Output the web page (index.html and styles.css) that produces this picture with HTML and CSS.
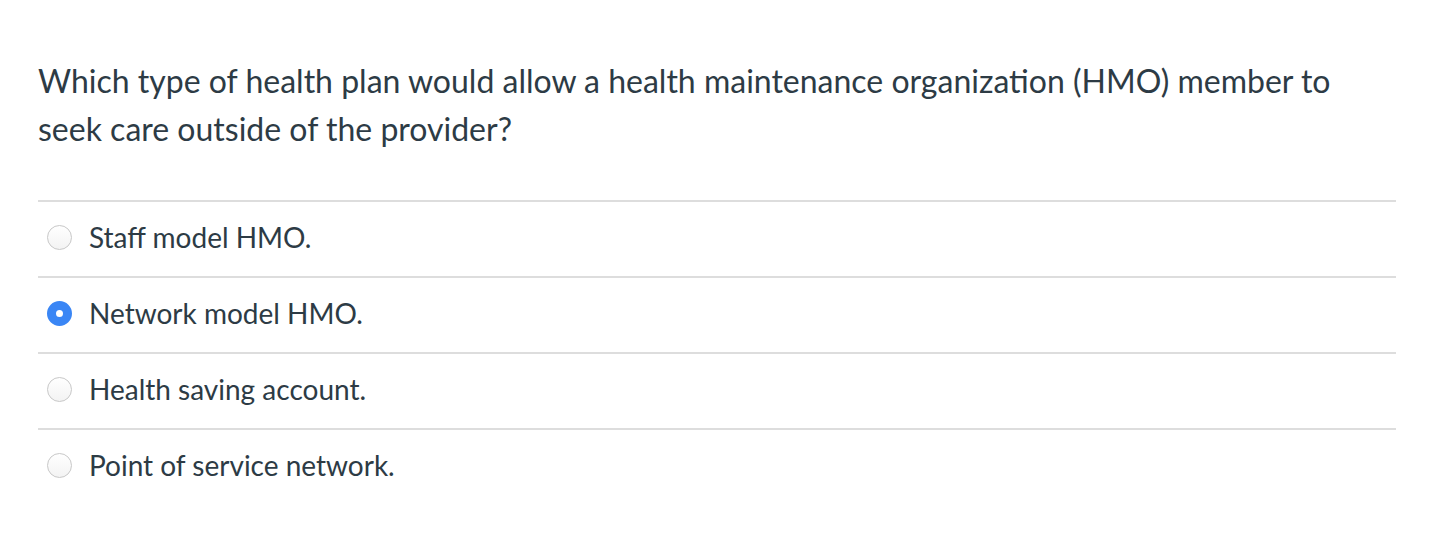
FILE: index.html
```html
<!DOCTYPE html>
<html>
<head>
<meta charset="utf-8">
<link rel="stylesheet" href="styles.css">
</head>
<body>
<div class="quiz">
  <div class="question">Which type of health plan would allow a health maintenance organization (HMO) member to seek care outside of the provider?</div>
  <div class="answers">
    <label class="answer"><span class="radio"></span><span class="text">Staff model HMO.</span></label>
    <label class="answer"><span class="radio checked"></span><span class="text">Network model HMO.</span></label>
    <label class="answer"><span class="radio"></span><span class="text">Health saving account.</span></label>
    <label class="answer"><span class="radio"></span><span class="text">Point of service network.</span></label>
  </div>
</div>
</body>
</html>
```
FILE: styles.css
```css
html, body {
  margin: 0;
  padding: 0;
  background: #fff;
}
body {
  font-family: Lato, "Open Sans", sans-serif;
  color: #2d3b45;
}
.quiz {
  padding: 57px 35px 0 38px;
}
.question {
  font-size: 32px;
  line-height: 48px;
  padding-bottom: 47px;
  border-bottom: 2px solid #dddddd;
}
.answer {
  display: flex;
  align-items: center;
  height: 70px;
  padding-bottom: 4px;
  border-bottom: 2px solid #dddddd;
}
.answer:last-child {
  border-bottom: none;
}
.radio {
  box-sizing: border-box;
  width: 25px;
  height: 25px;
  margin-left: 9px;
  margin-right: 17px;
  border-radius: 50%;
  border: 1px solid #c8c8c8;
  background: linear-gradient(#ffffff, #f3f3f3);
  flex: none;
}
.radio.checked {
  border: 9px solid #3a86f5;
  background: #fff;
}
.text {
  font-size: 28px;
  line-height: 34px;
}
```
